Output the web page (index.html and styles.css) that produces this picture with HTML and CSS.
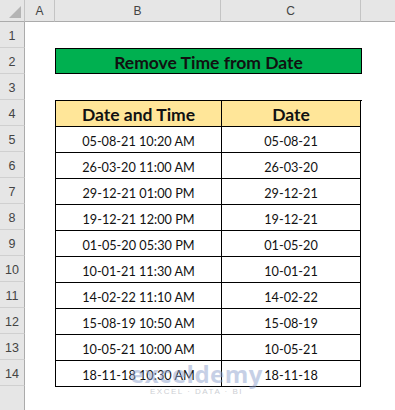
FILE: index.html
```html
<!DOCTYPE html>
<html>
<head>
<meta charset="utf-8">
<link rel="stylesheet" href="styles.css">
</head>
<body>
<div class="sheet">
  <div class="corner"><span class="tri"></span></div>
  <div class="colhead">A</div>
  <div class="colhead">B</div>
  <div class="colhead">C</div>
  <div class="colhead last"></div>

  <div class="rowhead r1">1</div>
  <div class="rowhead r2">2</div>
  <div class="rowhead r3">3</div>
  <div class="rowhead r4">4</div>
  <div class="rowhead r5">5</div>
  <div class="rowhead r6">6</div>
  <div class="rowhead r7">7</div>
  <div class="rowhead r8">8</div>
  <div class="rowhead r9">9</div>
  <div class="rowhead r10">10</div>
  <div class="rowhead r11">11</div>
  <div class="rowhead r12">12</div>
  <div class="rowhead r13">13</div>
  <div class="rowhead r14">14</div>
  <div class="rowhead r15"></div>

  <div class="title">Remove Time from Date</div>

  <div class="tbl">
    <div class="cell th">Date and Time</div><div class="cell th end">Date</div>
    <div class="cell">05-08-21 10:20 AM</div><div class="cell end">05-08-21</div>
    <div class="cell">26-03-20 11:00 AM</div><div class="cell end">26-03-20</div>
    <div class="cell">29-12-21 01:00 PM</div><div class="cell end">29-12-21</div>
    <div class="cell">19-12-21 12:00 PM</div><div class="cell end">19-12-21</div>
    <div class="cell">01-05-20 05:30 PM</div><div class="cell end">01-05-20</div>
    <div class="cell">10-01-21 11:30 AM</div><div class="cell end">10-01-21</div>
    <div class="cell">14-02-22 11:10 AM</div><div class="cell end">14-02-22</div>
    <div class="cell">15-08-19 10:50 AM</div><div class="cell end">15-08-19</div>
    <div class="cell">10-05-21 10:00 AM</div><div class="cell end">10-05-21</div>
    <div class="cell">18-11-18 10:30 AM</div><div class="cell end">18-11-18</div>
  </div>

  <div class="watermark">
    <div class="wm-name">exceldemy</div>
    <div class="wm-tag">EXCEL · DATA · BI</div>
  </div>
</div>
</body>
</html>
```

FILE: styles.css
```css
* { box-sizing: border-box; }
html, body { margin: 0; padding: 0; background: #ffffff; overflow: hidden; }
body { width: 395px; height: 410px; }

.sheet {
  position: relative;
  display: grid;
  grid-template-columns: 25px 30px 166px 140px 34px;
  grid-template-rows: 22px repeat(15, 26px);
  width: 395px;
  height: 410px;
  font-family: "Lato", "Liberation Sans", sans-serif;
  background: #ffffff;
}

.corner {
  grid-column: 1; grid-row: 1;
  background: #e6e6e6;
  border-right: 1px solid #c4c4c4;
  border-bottom: 1px solid #ababab;
  position: relative;
}
.tri {
  position: absolute;
  right: 3px; bottom: 3px;
  width: 12px; height: 12px;
  background: #b4b4b4;
  clip-path: polygon(100% 0, 100% 100%, 0 100%);
}

.colhead {
  grid-row: 1;
  background: #e6e6e6;
  border-right: 1px solid #c4c4c4;
  border-bottom: 1px solid #ababab;
  display: flex; align-items: center; justify-content: center;
  font-family: "Liberation Sans", sans-serif;
  font-size: 12px;
  color: #444;
  padding-top: 1px;
}
.colhead.last { border-right: none; }

.rowhead {
  grid-column: 1;
  background: #e6e6e6;
  border-right: 1px solid #ababab;
  border-bottom: 1px solid #d0d0d0;
  display: flex; align-items: center; justify-content: center;
  font-family: "Liberation Sans", sans-serif;
  font-size: 12.5px;
  color: #444;
  padding-top: 3px;
}
.r1 { grid-row: 2; } .r2 { grid-row: 3; } .r3 { grid-row: 4; } .r4 { grid-row: 5; }
.r5 { grid-row: 6; } .r6 { grid-row: 7; } .r7 { grid-row: 8; } .r8 { grid-row: 9; }
.r9 { grid-row: 10; } .r10 { grid-row: 11; } .r11 { grid-row: 12; } .r12 { grid-row: 13; }
.r13 { grid-row: 14; } .r14 { grid-row: 15; } .r15 { grid-row: 16; border-bottom: none; }

.title {
  grid-column: 3 / 5; grid-row: 3;
  background: #00b050;
  border: 1px solid #000;
  display: flex; align-items: center; justify-content: center;
  font-weight: 700;
  font-size: 17.5px;
  color: #111;
  padding-top: 2px;
  margin-right: -1px;
}

.tbl {
  grid-column: 3 / 5; grid-row: 5 / 16;
  display: grid;
  grid-template-columns: 166px 140px;
  grid-auto-rows: 26px;
  border-top: 1px solid #000;
  margin-right: -1px;
}
.cell {
  border-left: 1px solid #000;
  border-bottom: 1px solid #000;
  display: flex; align-items: center; justify-content: center;
  font-size: 12.7px;
  color: #111;
  padding-top: 3px;
}
.cell.end { border-right: 1px solid #000; }
.cell.th {
  background: #ffe699;
  font-weight: 700;
  font-size: 17.5px;
  padding-top: 2px;
}

.watermark {
  position: absolute;
  left: 124px; top: 362px;
  width: 145px;
  text-align: center;
  pointer-events: none;
  opacity: 0.5;
}
.wm-name {
  font-family: "Open Sans", sans-serif;
  font-weight: 700;
  font-size: 24px;
  line-height: 24px;
  color: #8fa3cf;
  letter-spacing: 0.5px;
}
.wm-tag {
  font-family: "Liberation Sans", sans-serif;
  font-size: 8px;
  letter-spacing: 1.5px;
  color: #9aa0aa;
  margin-top: 1px;
}
```
